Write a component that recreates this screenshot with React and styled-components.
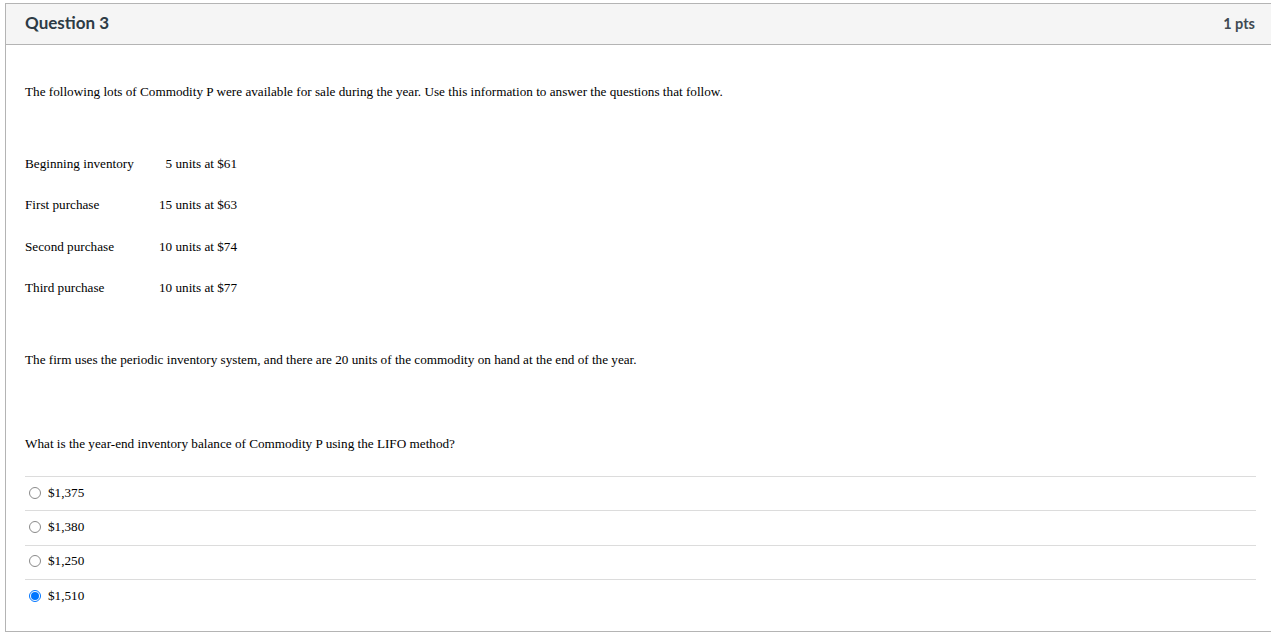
import styled, { createGlobalStyle } from "styled-components";

const GlobalStyle = createGlobalStyle`
  html, body {
    margin: 0;
    padding: 0;
    background: #ffffff;
    overflow: hidden;
  }
`;

const Page = styled.div`
  padding: 3px 0 0 5px;
`;

const Card = styled.div`
  box-sizing: border-box;
  width: 1268px;
  border: 1px solid #b4b4b4;
  background: #ffffff;
`;

const Header = styled.div`
  box-sizing: border-box;
  display: flex;
  align-items: center;
  justify-content: space-between;
  height: 41px;
  padding: 0 17px 3px 19px;
  background: #f5f5f5;
  border-bottom: 1px solid #b4b4b4;
  font-family: Lato, "Noto Sans", sans-serif;
  font-weight: 700;
  color: #2d3b45;
`;

const Title = styled.span`
  font-size: 17px;
`;

const Points = styled.span`
  font-size: 14.5px;
  color: #404a52;
  margin-top: 1px;
`;

const Body = styled.div`
  padding: 38px 16px 18px 19px;
  font-family: "Liberation Serif", "Times New Roman", serif;
  font-size: 13.2px;
  color: #000000;
`;

const Para = styled.p`
  margin: 0 0 ${(p) => p.$after || 0}px;
  line-height: 18px;
`;

const Lots = styled.div`
  display: grid;
  grid-template-columns: 120px 92px;
  grid-auto-rows: 41.5px;
  align-items: center;
  margin: 42px 0 42px;
`;

const Value = styled.span`
  text-align: right;
`;

const Answers = styled.div`
  margin-top: 23px;
`;

const Answer = styled.label`
  box-sizing: border-box;
  display: flex;
  align-items: center;
  gap: 6px;
  height: 34.3px;
  padding: 0 0 2px 4px;
  border-top: 1px solid #dcdcdc;
  line-height: 18px;
`;

const Radio = styled.span`
  box-sizing: border-box;
  width: 12px;
  height: 12px;
  border-radius: 50%;
  border: 1px solid ${(p) => (p.$checked ? "#0075ff" : "#8a8a8a")};
  display: flex;
  align-items: center;
  justify-content: center;
  margin-right: 1px;

  &::after {
    content: "";
    display: ${(p) => (p.$checked ? "block" : "none")};
    width: 8px;
    height: 8px;
    border-radius: 50%;
    background: #0075ff;
  }
`;

const lots = [
  ["Beginning inventory", "5 units at $61"],
  ["First purchase", "15 units at $63"],
  ["Second purchase", "10 units at $74"],
  ["Third purchase", "10 units at $77"],
];

const answers = ["$1,375", "$1,380", "$1,250", "$1,510"];

export default function App() {
  return (
    <>
      <GlobalStyle />
      <Page>
        <Card>
          <Header>
            <Title>Question 3</Title>
            <Points>1 pts</Points>
          </Header>
          <Body>
            <Para>
              The following lots of Commodity P were available for sale during the year. Use this
              information to answer the questions that follow.
            </Para>
            <Lots>
              {lots.flatMap(([label, value]) => [
                <span key={label}>{label}</span>,
                <Value key={value}>{value}</Value>,
              ])}
            </Lots>
            <Para $after={66}>
              The firm uses the periodic inventory system, and there are 20 units of the commodity on
              hand at the end of the year.
            </Para>
            <Para>What is the year-end inventory balance of Commodity P using the LIFO method?</Para>
            <Answers>
              {answers.map((a, i) => (
                <Answer key={a}>
                  <Radio $checked={i === 3} />
                  {a}
                </Answer>
              ))}
            </Answers>
          </Body>
        </Card>
      </Page>
    </>
  );
}
